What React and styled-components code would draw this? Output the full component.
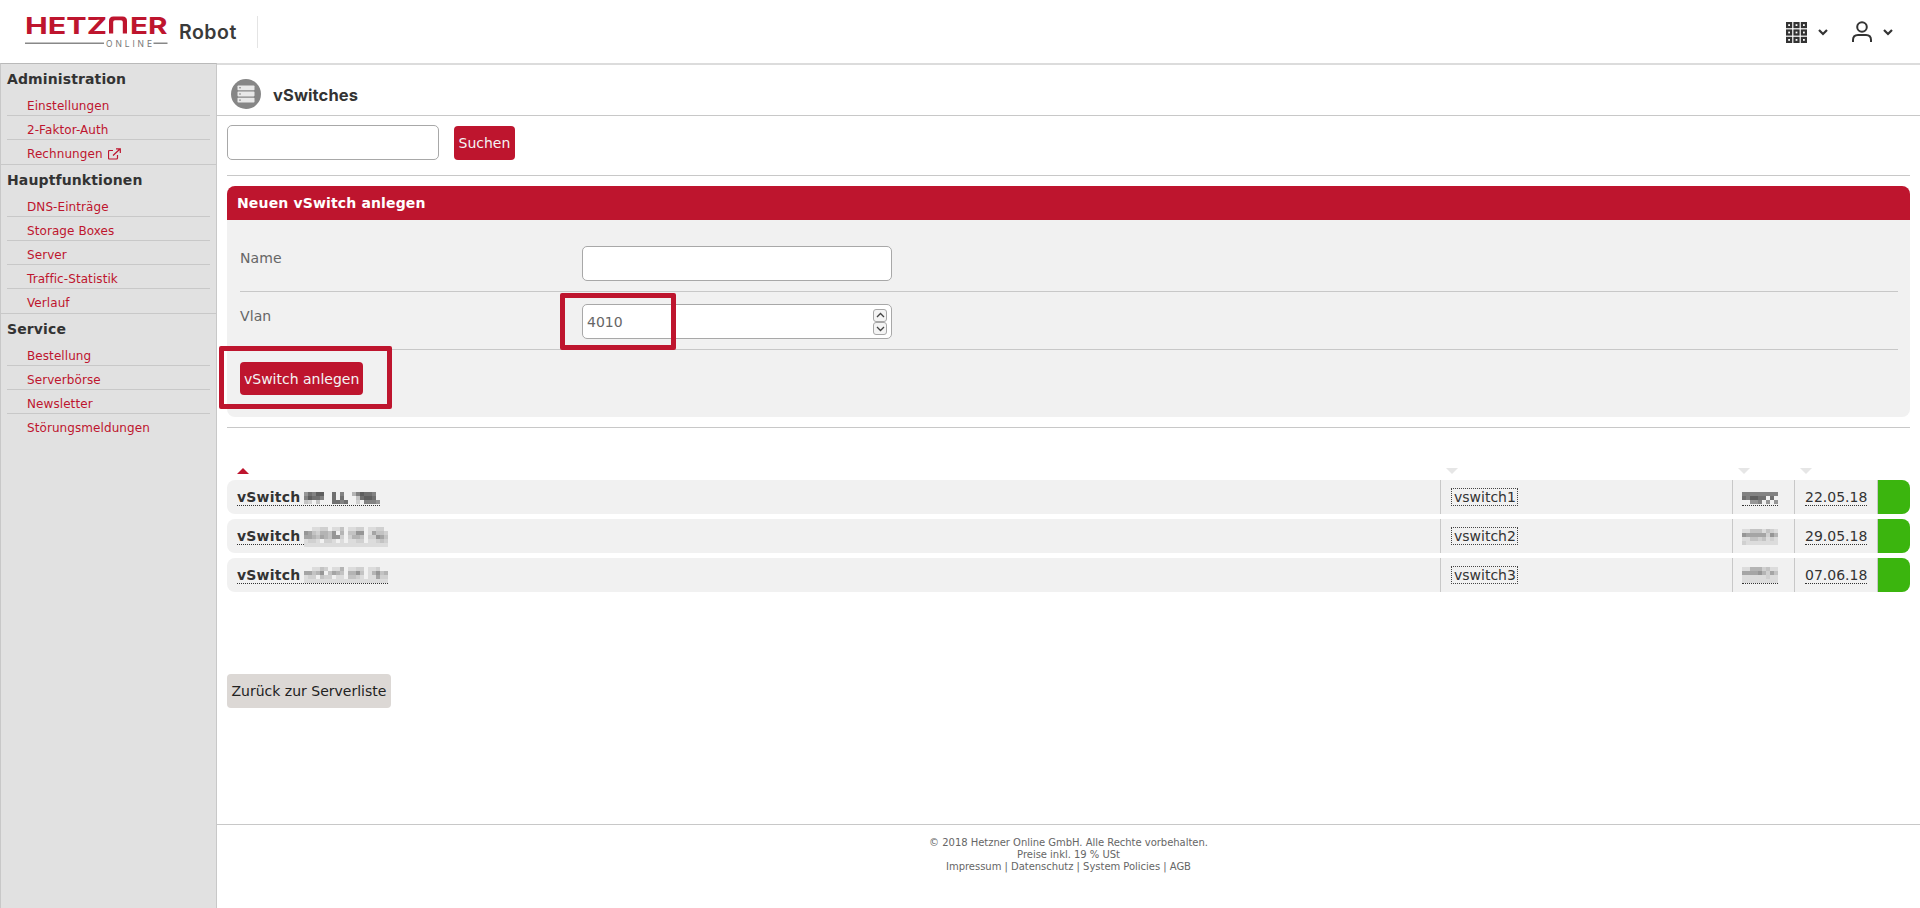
import React from 'react';
import styled, { createGlobalStyle } from 'styled-components';

const Global = createGlobalStyle`
  html, body { margin: 0; padding: 0; height: 100%; background: #fff; }
  body { font-family: "DejaVu Sans", sans-serif; font-size: 13px; color: #333; }
  * { box-sizing: border-box; }
`;
const RED = '#be152e';

const Page = styled.div`display:flex;flex-direction:column;height:908px;width:1920px;overflow:hidden;position:relative;`;
const Header = styled.header`height:65px;flex:none;display:flex;align-items:center;padding-left:25px;border-bottom:2px solid #dcdcdc;`;
const Brand = styled.span`font:600 19.500px "Inter",sans-serif;color:#3a3a3a;margin-left:11px;letter-spacing:.5px;`;
const HeadDivider = styled.span`width:1px;height:32px;background:#e4e4e4;margin-left:20px;`;
const HeadRight = styled.div`margin-left:auto;display:flex;align-items:center;gap:24px;padding-right:27px;margin-top:1px;`;
const HeadItem = styled.span`display:flex;align-items:center;gap:11px;`;
const Body = styled.div`flex:1;display:flex;min-height:0;`;
const Sidebar = styled.nav`width:217px;flex:none;background:#e1e1e1;border-left:1px solid #c8c8c8;border-right:1px solid #c8c8c8;border-top:1px solid #b9b9b9;margin-top:-2px;`;
const Group = styled.section`border-bottom:${p => p.$last ? 'none' : '1px solid #c8c8c8'};`;
const GroupTitle = styled.h3`margin:0;padding:6px 0 0 6px;height:28px;font:bold 14px/18px "DejaVu Sans",sans-serif;color:#333;letter-spacing:.12px;`;
const Item = styled.a`display:flex;align-items:center;gap:5px;height:24px;margin:0 6px;padding:4px 0 0 20px;font-size:12px;color:${RED};letter-spacing:.08px;border-bottom:${p => p.$last ? 'none' : '1px solid #c8c8c8'};`;
const Main = styled.main`flex:1;display:flex;flex-direction:column;min-width:0;`;
const TitleBar = styled.div`height:51px;flex:none;display:flex;align-items:center;gap:12px;padding:8px 0 0 14px;border-bottom:1px solid #c8c8c8;`;
const Title = styled.h1`margin:0;font:bold 16.500px "Inter",sans-serif;color:#333;letter-spacing:.1px;position:relative;top:1px;`;
const Content = styled.div`flex:1;padding:9px 10px 0 10px;`;
const SearchRow = styled.div`display:flex;align-items:flex-start;gap:15px;height:35px;`;
const SearchButtonSlot = styled.div`margin-top:1px;`;
const Input = styled.div`width:${p => p.$w}px;height:35px;background:#fff;border:1px solid #a8a8a8;border-radius:5px;display:flex;align-items:center;padding:0 4px 0 4px;justify-content:space-between;font-size:14px;color:#666;`;
const Button = styled.button`height:${p => p.$h || 33}px;padding:0 ${p => p.$pad || 4}px;border:none;border-radius:4px;background:${p => p.$grey ? '#dcd8d5' : RED};color:${p => p.$grey ? '#222' : '#f4f4f4'};font:14px "DejaVu Sans",sans-serif;`;
const Rule = styled.hr`border:none;height:1px;background:#c8c8c8;margin:${p => p.$m};`;
const Panel = styled.section`background:#f1f1f1;border-radius:8px;height:231px;display:flex;flex-direction:column;`;
const PanelHead = styled.div`height:34px;flex:none;background:${RED};border-radius:8px 8px 0 0;color:#fff;font:bold 14px/34px "DejaVu Sans",sans-serif;padding-left:10px;letter-spacing:.15px;`;
const FormRow = styled.div`display:grid;grid-template-columns:342px 1fr;flex:none;height:${p => p.$h}px;margin:0 12px 0 13px;padding-top:${p => p.$pt}px;border-bottom:1px solid #c8c8c8;`;
const Label = styled.label`font-size:14px;line-height:16px;color:#666;padding-top:4px;letter-spacing:.1px;`;
const Stepper = styled.span`display:flex;flex-direction:column;`;
const Step = styled.span`width:14px;height:13px;border:1px solid #a8a8a8;border-radius:3px;background:#f4f4f4;display:flex;align-items:center;justify-content:center;`;
const FormFoot = styled.div`padding:12px 0 0 13px;`;
const Arrows = styled.div`display:flex;height:6px;margin-top:40px;`;
const Cols = '1fr 292px 62px 83px 33px';
const ArrowCell = styled.span`width:0;height:0;border-left:6px solid transparent;border-right:6px solid transparent;border-${p => p.$up ? 'bottom' : 'top'}:6px solid ${p => p.$up ? RED : '#e6e6e6'};margin-left:${p => p.$ml}px;`;
const Rows = styled.div`display:flex;flex-direction:column;gap:5px;margin-top:6px;`;
const Row = styled.div`display:grid;grid-template-columns:${Cols};height:34px;background:#f1f1f1;border-radius:8px;align-items:stretch;font-size:14px;`;
const Cell = styled.div`display:flex;align-items:center;padding-left:${p => p.$pl || 10}px;border-left:${p => p.$first ? 'none' : '1px solid #c8c8c8'};`;
const LinkBox = styled.span`display:flex;align-items:center;color:#333;border-bottom:1px dotted #333;height:17px;line-height:16px;`;
const NameLink = styled(LinkBox)`font-weight:bold;letter-spacing:.2px;gap:4px;`;
const Tag = styled.span`border:1px dotted #444;height:18px;line-height:16px;padding:0 1px 0 2px;width:67px;color:#333;`;
const Status = styled.div`background:#3bb50e;border-radius:0 8px 8px 0;border-left:1px solid #c8c8c8;`;
const Back = styled.div`margin-top:82px;`;
const Footer = styled.footer`height:84px;flex:none;border-top:1px solid #c8c8c8;padding-top:12px;text-align:center;font-size:10px;line-height:12px;color:#666;letter-spacing:-.03px;`;
const Mark = styled.div`position:absolute;border:5px solid ${RED};border-radius:2px;left:${p => p.$l}px;top:${p => p.$t}px;width:${p => p.$w}px;height:${p => p.$h}px;pointer-events:none;`;
const MosaicSvg = styled.svg`flex:none;display:block;margin-top:${p => p.$mt || 0}px;`;

const Logo = () => (
  <svg width="143" height="48" viewBox="0 -8 143 48">
    <g fill="#be152e" fontFamily="Inter, sans-serif" fontWeight="700" fontSize="23.500">
      <text x="0" y="17.500" textLength="82" lengthAdjust="spacingAndGlyphs">HETZ</text>
      <path d="M84 17.500V5q0-4.500 4.500-4.500h9q4.500 0 4.500 4.500v12.500h-4.200V6q0-1.800-1.800-1.800h-6q-1.800 0-1.800 1.800v11.500z" />
      <text x="105" y="17.500" textLength="37.500" lengthAdjust="spacingAndGlyphs">ER</text>
    </g>
    <rect x="0" y="26.500" width="79" height="1.500" fill="#888" />
    <rect x="128.500" y="26.500" width="14" height="1.500" fill="#888" />
    <text x="81" y="30.500" fontFamily="Inter, sans-serif" fontSize="8.500" fill="#777" textLength="46" lengthAdjust="spacing">ONLINE</text>
  </svg>
);

const Grid = () => (
  <svg width="21" height="21" viewBox="0 0 21 21" fill="none" stroke="#333" strokeWidth="2.200">
    {[0, 1, 2].flatMap(r => [0, 1, 2].map(c => <rect key={`${r}${c}`} x={1.100 + c * 7.400} y={1.100 + r * 7.400} width="4" height="4" />))}
  </svg>
);
const User = () => (
  <svg width="20" height="22" viewBox="0 0 20 22" fill="none" stroke="#333" strokeWidth="2">
    <circle cx="10" cy="6" r="4.800" />
    <path d="M1 21v-2q0-5 5-5h8q5 0 5 5v2" />
  </svg>
);
const Chev = () => (
  <svg width="10" height="7" viewBox="0 0 10 7" fill="none" stroke="#333" strokeWidth="2.200"><path d="M1 1l4 4 4-4" /></svg>
);
const Ext = () => (
  <svg width="13" height="12" viewBox="0 0 13 12" fill="none" stroke={RED} strokeWidth="1.200">
    <path d="M9.500 7v3a1 1 0 0 1-1 1h-7a1 1 0 0 1-1-1V3.500a1 1 0 0 1 1-1H5" />
    <path d="M5 7.500L12 1M8 .8h4.300V5" />
  </svg>
);
const ServerIcon = () => (
  <svg width="30" height="30" viewBox="0 0 30 30">
    <circle cx="15" cy="15" r="15" fill="#868686" />
    <g fill="#e8e8e8">
      <rect x="6.500" y="6.500" width="17" height="4.800" rx=".8" />
      <rect x="6.500" y="12.600" width="17" height="4.800" rx=".8" />
      <rect x="6.500" y="18.700" width="17" height="4.800" rx=".8" />
    </g>
    <g fill="#868686">
      <rect x="8" y="8.300" width="2" height="1" /><rect x="8" y="14.500" width="2" height="1" /><rect x="8" y="20.600" width="2" height="1" />
    </g>
  </svg>
);
const Up = () => <svg width="9" height="7" viewBox="0 0 9 7" fill="none" stroke="#444" strokeWidth="1.300"><path d="M1 5l3.500-3.500L8 5" /></svg>;
const Down = () => <svg width="9" height="7" viewBox="0 0 9 7" fill="none" stroke="#444" strokeWidth="1.300"><path d="M1 2l3.500 3.500L8 2" /></svg>;

/* Pixelated (redacted) text: each digit is a grey level, '.' is empty */
const LEVELS = [95, 112, 130, 150, 165, 180, 195, 208, 220];
const Mosaic = ({ rows, cell = 4, mt }) => {
  const w = rows[0].length * cell;
  const h = rows.length * cell;
  return (
    <MosaicSvg width={w} height={h} viewBox={`0 0 ${w} ${h}`} shapeRendering="crispEdges" $mt={mt}>
      {rows.flatMap((r, y) => r.split('').map((c, x) => {
        if (c === '.') return null;
        const v = LEVELS[+c];
        return <rect key={`${x}-${y}`} x={x * cell} y={y * cell} width={cell} height={cell} fill={`rgb(${v},${v},${v})`} />;
      }))}
    </MosaicSvg>
  );
};

const M1 = ['31200..1.2..520112.', '20112..1.1...61001.', '67.6...1121..7.2223'];
const M2 = [
  '..8877.886.8877.8877.',
  '34675563.5.6633.84667',
  '4456456337.7556.77346',
  '8778.778.8.8877.88767',
  '888888888888888888888',
];
const M3 = [
  '..8867.885.8877.887..',
  '44653.6456.5536.85365',
  '877.677.88.6678.88477',
  '888888888888888888888',
];
const D1 = ['222222222', '120011.1.', '..332.3.3'];
const D2 = ['886668678', '344444735', '886676878', '788888888'];
const D3 = ['885557688', '444435746', '888888788', '888888888'];

const rows = [
  { m: M1, d: D1, tag: 'vswitch1', date: '22.05.18', mt: 3, dm: 3 },
  { m: M2, d: D2, tag: 'vswitch2', date: '29.05.18', mt: 2, dm: 2 },
  { m: M3, d: D3, tag: 'vswitch3', date: '07.06.18', mt: 1, dm: 1 },
];
const nav = [
  { title: 'Administration', items: ['Einstellungen', '2-Faktor-Auth', 'Rechnungen'] },
  { title: 'Hauptfunktionen', items: ['DNS-Einträge', 'Storage Boxes', 'Server', 'Traffic-Statistik', 'Verlauf'] },
  { title: 'Service', items: ['Bestellung', 'Serverbörse', 'Newsletter', 'Störungsmeldungen'], last: true },
];

export default function App() {
  return (
    <Page>
      <Global />
      <Header>
        <Logo />
        <Brand>Robot</Brand>
        <HeadDivider />
        <HeadRight>
          <HeadItem><Grid /><Chev /></HeadItem>
          <HeadItem><User /><Chev /></HeadItem>
        </HeadRight>
      </Header>
      <Body>
        <Sidebar>
          {nav.map(g => (
            <Group key={g.title} $last={g.last}>
              <GroupTitle>{g.title}</GroupTitle>
              {g.items.map((it, i) => (
                <Item key={it} $last={i === g.items.length - 1}>{it}{it === 'Rechnungen' && <Ext />}</Item>
              ))}
            </Group>
          ))}
        </Sidebar>
        <Main>
          <TitleBar><ServerIcon /><Title>vSwitches</Title></TitleBar>
          <Content>
            <SearchRow><Input $w={212} /><SearchButtonSlot><Button $h={34} $pad={4.500}>Suchen</Button></SearchButtonSlot></SearchRow>
            <Rule $m="15px 0 10px" />
            <Panel>
              <PanelHead>Neuen vSwitch anlegen</PanelHead>
              <FormRow $h={72} $pt={26}><Label>Name</Label><Input $w={310} /></FormRow>
              <FormRow $h={58} $pt={12}><Label>Vlan</Label>
                <Input $w={310}>4010<Stepper><Step><Up /></Step><Step><Down /></Step></Stepper></Input>
              </FormRow>
              <FormFoot><Button>vSwitch anlegen</Button></FormFoot>
            </Panel>
            <Rule $m="10px 0 0" />
            <Arrows>
              <ArrowCell $up $ml={10} />
              <ArrowCell $ml={1197} />
              <ArrowCell $ml={280} />
              <ArrowCell $ml={50} />
            </Arrows>
            <Rows>
              {rows.map(r => (
                <Row key={r.tag}>
                  <Cell $first><NameLink>vSwitch <Mosaic rows={r.m} mt={r.mt} /></NameLink></Cell>
                  <Cell><Tag>{r.tag}</Tag></Cell>
                  <Cell $pl={9}><LinkBox><Mosaic rows={r.d} mt={r.dm} /></LinkBox></Cell>
                  <Cell><LinkBox>{r.date}</LinkBox></Cell>
                  <Status />
                </Row>
              ))}
            </Rows>
            <Back><Button $grey $h={34} $pad={4.500}>Zurück zur Serverliste</Button></Back>
          </Content>
          <Footer>
            © 2018 Hetzner Online GmbH. Alle Rechte vorbehalten.<br />
            Preise inkl. 19 % USt<br />
            Impressum | Datenschutz | System Policies | AGB
          </Footer>
        </Main>
      </Body>
      <Mark $l={560} $t={293} $w={116} $h={57} />
      <Mark $l={219} $t={346} $w={173} $h={63} />
    </Page>
  );
}
